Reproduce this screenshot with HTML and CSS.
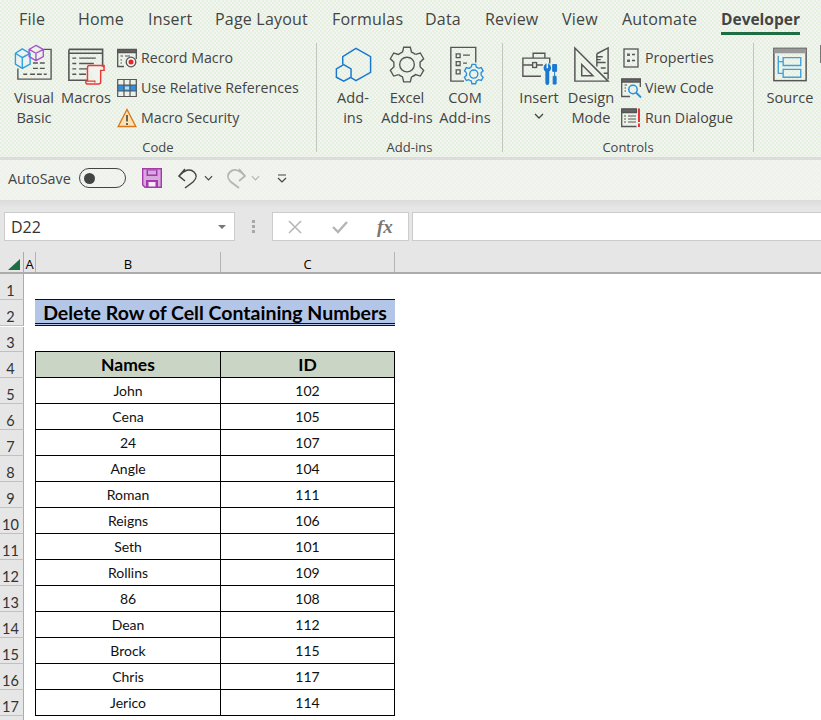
FILE: index.html
```html
<!DOCTYPE html>
<html lang="en">
<head>
<meta charset="utf-8">
<title>Delete Row of Cell Containing Numbers</title>
<link rel="stylesheet" href="styles.css">
</head>
<body>
<svg class="defs" width="0" height="0"><defs>
  <path id="tooth" d="M15.4 8.3L16.6 3.3H23.4L24.6 8.3A13.5 13.5 0 0 1 28.7 10.7"/>
  <g id="gear">
    <use href="#tooth"/>
    <use href="#tooth" transform="rotate(60 20 21)"/>
    <use href="#tooth" transform="rotate(120 20 21)"/>
    <use href="#tooth" transform="rotate(180 20 21)"/>
    <use href="#tooth" transform="rotate(240 20 21)"/>
    <use href="#tooth" transform="rotate(300 20 21)"/>
    <circle cx="20" cy="21" r="7.5"/>
  </g>
</defs></svg>

<header class="ribbon">
  <nav class="tabs">
    <span class="tab tab-file">File</span>
    <span class="tab tab-home">Home</span>
    <span class="tab tab-insert">Insert</span>
    <span class="tab tab-layout">Page Layout</span>
    <span class="tab tab-formulas">Formulas</span>
    <span class="tab tab-data">Data</span>
    <span class="tab tab-review">Review</span>
    <span class="tab tab-view">View</span>
    <span class="tab tab-automate">Automate</span>
    <span class="tab tab-active">Developer</span>
  </nav>
  <div class="groups">
    <section class="group group-code">
      <div class="group-body body-code">
        <div class="big w52">
          <svg class="big-icon" viewBox="0 0 40 44" fill="none" stroke="#555" stroke-width="1.4">
            <path d="M30 5.5H37.500V36H3.500V25"/><path d="M19 19.500H33M19 25H33M9 31H13M16 31H33" stroke-dasharray="5 2"/>
            <path d="M8 5L16 9.500V20.500L8 25L1 20.500V9.500ZM1 9.500L8 14L16 9.500M8 14V25" stroke="#2b9fe0" fill="#eef2ee"/>
            <path d="M22 1.500L29.500 5.500V13L22 17L15 13V5.500ZM15 5.500L22 9.500L29.500 5.500M22 9.500V17" stroke="#a653c9"/>
          </svg>
          <span class="big-label">Visual<br>Basic</span>
        </div>
        <div class="big w52">
          <svg class="big-icon" viewBox="0 0 40 44" fill="none" stroke="#555" stroke-width="1.4">
            <path d="M2.500 5.500H37V23M21 37H2.500V5.500M2.500 9.500H37" stroke-width="1.6"/>
            <path d="M6 14.500H10M13 14.500H30M6 20H10M13 20H28M6 25.500H10M13 25.500H22M6 31H10M13 31H20"/>
            <path d="M23 22H38.500V27H35V39C35 40.500 34 41 33 41H21.500C20 41 19.500 39.500 20 38H29V39.500M23 22C21.500 22 21.500 24 21.500 25V38M35 22C36.500 22 38.500 23 38.500 25" stroke="#ea3a36" stroke-width="1.5" fill="#f1f3ef"/>
          </svg>
          <span class="big-label">Macros</span>
        </div>
        <div class="small-col small-col-code">
          <div class="small">
            <svg class="small-icon" viewBox="0 0 20 20" fill="none" stroke="#555" stroke-width="1.3">
              <path d="M.7 2.700H19.300V11M7 18.500H.7V2.700"/><path d="M.7 1.500H19.300V4.500H.7Z" fill="#666"/>
              <path d="M3.500 8H6M8 8H13M3.500 12H5M3.500 15H5" stroke-width="1"/>
              <circle cx="14" cy="14" r="4.800" fill="#f1f3ef"/><circle cx="14" cy="14" r="2.500" fill="#e8262a" stroke="none"/>
            </svg>
            <span>Record Macro</span>
          </div>
          <div class="small">
            <svg class="small-icon" viewBox="0 0 20 20" fill="none" stroke="#555" stroke-width="1.2">
              <rect x=".7" y="7" width="18.600" height="6" fill="#2f8fe0" stroke="none"/>
              <rect x="7.500" y="8.500" width="5" height="3" fill="#bcdcf6" stroke="none"/>
              <path d="M.7 1.500H19.300V18.500H.7ZM.7 7H19.300M.7 13H19.300M7 1.500V18.500M13 1.500V18.500"/>
            </svg>
            <span>Use Relative References</span>
          </div>
          <div class="small">
            <svg class="small-icon" viewBox="0 0 20 20" fill="none">
              <path d="M10 1.500L18.800 18.500H1.200Z" fill="#fbe3b4" stroke="#d9791e" stroke-width="1.400"/>
              <path d="M10 7V13.500M10 15V17" stroke="#444" stroke-width="1.600"/>
            </svg>
            <span>Macro Security</span>
          </div>
        </div>
      </div>
      <div class="group-label">Code</div>
    </section>

    <section class="group group-addins">
      <div class="group-body body-addins">
        <div class="big w50">
          <svg class="big-icon" viewBox="0 0 40 44" fill="none" stroke="#1a78d0" stroke-width="1.500">
            <path d="M9.500 21V13L23 4.500L38 13V29L23 37.500L18 34.500"/>
            <path d="M10.500 21L18 25.500V34L10.500 38L3 34V25.500Z"/>
          </svg>
          <span class="big-label">Add-<br>ins</span>
        </div>
        <div class="big w58">
          <svg class="big-icon" viewBox="0 0 40 44" fill="none" stroke="#555" stroke-width="1.400"><use href="#gear"/></svg>
          <span class="big-label">Excel<br>Add-ins</span>
        </div>
        <div class="big w58">
          <svg class="big-icon" viewBox="0 0 40 44" fill="none" stroke="#555" stroke-width="1.400">
            <path d="M19 38H5.500V3.500H31V19"/>
            <path d="M11 10H15V14H11ZM11 18H15V22H11ZM11 26.500H15V30.500H11ZM18 11.500H25M18 19.500H22" stroke-width="1.300"/>
            <g transform="translate(17.800 19) scale(.56)" stroke="#2a8fdc" stroke-width="2.500"><use href="#gear"/></g>
          </svg>
          <span class="big-label">COM<br>Add-ins</span>
        </div>
      </div>
      <div class="group-label">Add-ins</div>
    </section>

    <section class="group group-controls">
      <div class="group-body body-controls">
        <div class="big w52">
          <svg class="big-icon" viewBox="0 0 40 44" fill="none" stroke="#555" stroke-width="1.400">
            <path d="M22 33H3.500V14.500H31V20M14 14.500V9.500H26V14.500M3.500 21.500H13M18 21.500H24"/>
            <rect x="13.500" y="19" width="4" height="5"/>
            <path d="M27 21V25.500H30V21C32 22.500 32.500 26 29.800 28V39.500C29.800 42 27.200 42 27.200 39.500V28C24.500 26 25 22.500 27 21Z" fill="#1a78d0" stroke="#1a78d0"/>
            <path d="M34 21H38V28H34ZM36 28V33M34.500 33H37.500V41H34.500Z" fill="#1a78d0" stroke="#1a78d0" stroke-width="1"/>
          </svg>
          <span class="big-label">Insert</span>
          <svg class="chev" viewBox="0 0 10 6" fill="none" stroke="#444" stroke-width="1.300"><path d="M1 1L5 5L9 1"/></svg>
        </div>
        <div class="big w52">
          <svg class="big-icon" viewBox="0 0 40 44" fill="none" stroke="#555" stroke-width="1.500">
            <path d="M3.500 4V38H37.500Z"/><path d="M10.500 21V32.500H22Z"/>
            <path d="M26 10L37.500 4V36M26 10V23M26 13H32M26 19H35M26 16H30M30 24.500H35M33 30H37"/>
          </svg>
          <span class="big-label">Design<br>Mode</span>
        </div>
        <div class="small-col">
          <div class="small">
            <svg class="small-icon" viewBox="0 0 20 20" fill="none" stroke="#555" stroke-width="1.300">
              <rect x="3" y="1" width="14" height="18"/>
              <path d="M6 5.500H9V8H6ZM6 11.500H9V14H6Z" fill="#666" stroke="none"/>
              <path d="M11 6.500H14M11 12.500H14"/>
            </svg>
            <span>Properties</span>
          </div>
          <div class="small">
            <svg class="small-icon" viewBox="0 0 20 20" fill="none" stroke="#555" stroke-width="1.300">
              <path d="M.7 1.500H19.300V9M9 18.500H.7V1.500"/><path d="M.7 1H19.300V4H.7Z" fill="#666"/>
              <path d="M3.500 7H6M3.500 10H5M3.500 13H5" stroke-width="1"/>
              <circle cx="12" cy="11.500" r="4.200" stroke="#2a8fdc" stroke-width="1.500"/><path d="M15 14.500L20 19.500" stroke="#2a8fdc" stroke-width="1.800"/>
            </svg>
            <span>View Code</span>
          </div>
          <div class="small">
            <svg class="small-icon" viewBox="0 0 20 20" fill="none" stroke="#555" stroke-width="1.300">
              <path d="M.7 1.500H15.500M15.500 18.500H.7V1.500"/><path d="M.7 1H15.500V4.500H.7Z" fill="#666"/>
              <path d="M3 8H5M7 8H15M3 11H5M7 11H15M3 14H5M7 14H15" stroke-width="1"/>
              <path d="M18 .5V14M18 15.500V19" stroke="#e8343a" stroke-width="2"/>
            </svg>
            <span>Run Dialogue</span>
          </div>
        </div>
      </div>
      <div class="group-label">Controls</div>
    </section>

    <section class="group-last">
      <div class="big w52">
        <svg class="big-icon" viewBox="0 0 40 44" fill="none" stroke="#555" stroke-width="1.500">
          <rect x="3.500" y="4.500" width="33" height="33"/><rect x="3.500" y="4.500" width="33" height="5" fill="#999" stroke="none"/>
          <path d="M13 14H31V22H13ZM13 26H31V34H13ZM8 12V30H13M8 18H13" stroke="#3ea0dc" stroke-width="1.400"/>
        </svg>
        <span class="big-label">Source</span>
      </div>
      <div class="sliver"></div>
    </section>
  </div>
</header>

<div class="qat">
  <span class="autosave">AutoSave</span>
  <span class="toggle"><span class="knob"></span></span>
  <svg class="q-save" viewBox="0 0 20 20">
    <path d="M.7.7H19.300V19.300H3L.7 17Z" fill="#d9a6df" stroke="#a23cab" stroke-width="1.400"/>
    <path d="M4.500 1.500H15.500V8H4.500Z" fill="#a23cab"/><path d="M6 2.500H14V6.500H6Z" fill="#d9a6df"/>
    <path d="M4 12H16V19H4Z" fill="#a23cab"/><path d="M6.500 14H13.500V18.500H6.500Z" fill="#f6eaf7"/>
  </svg>
  <svg class="q-undo" viewBox="0 0 20 22" fill="none" stroke="#444" stroke-width="1.500">
    <path d="M7 2L1 9L7 14M1 9C6 3 12 1 16 5C20 9 18 12 15 15L7 21"/>
  </svg>
  <svg class="q-chev" viewBox="0 0 10 6" fill="none" stroke="#444" stroke-width="1.300"><path d="M1 1L5 5L9 1"/></svg>
  <svg class="q-redo" viewBox="0 0 20 22" fill="none" stroke="#b4b4b4" stroke-width="1.800">
    <path d="M13 2L19 9L13 14M19 9C14 3 8 1 4 5C0 9 2 12 5 15L13 21"/>
  </svg>
  <svg class="q-chev q-chev-off" viewBox="0 0 10 6" fill="none" stroke="#b4b4b4" stroke-width="1.300"><path d="M1 1L5 5L9 1"/></svg>
  <svg class="q-more" viewBox="0 0 10 9" fill="none" stroke="#444" stroke-width="1.200"><path d="M1 1H9M1 4L5 8L9 4"/></svg>
</div>

<div class="fbar">
  <div class="namebox"><span>D22</span><i class="caret"></i></div>
  <div class="grip"><i></i><i></i><i></i></div>
  <div class="fbtns">
    <svg class="f-x" viewBox="0 0 14 14" fill="none" stroke="#b5b5b5" stroke-width="1.500"><path d="M1 1L13 13M13 1L1 13"/></svg>
    <svg class="f-ok" viewBox="0 0 16 14" fill="none" stroke="#b5b5b5" stroke-width="2.400"><path d="M1 7L6 12L15 2"/></svg>
    <span class="f-fx">fx</span>
  </div>
  <div class="finput"></div>
</div>

<div class="colhead">
  <div class="corner"><i></i></div>
  <div class="ch ch-a">A</div>
  <div class="ch ch-b">B</div>
  <div class="ch ch-c">C</div>
</div>

<main class="sheet">
  <div class="row r-before"><div class="rh">1</div></div>
  <div class="row r-title"><div class="rh">2</div><div class="title-cell">Delete Row of Cell Containing Numbers</div></div>
  <div class="row r-before r-short"><div class="rh">3</div></div>
  <div class="row"><div class="rh">4</div><div class="c c-b th">Names</div><div class="c c-c th">ID</div></div>
  <div class="row"><div class="rh">5</div><div class="c c-b">John</div><div class="c c-c">102</div></div>
  <div class="row"><div class="rh">6</div><div class="c c-b">Cena</div><div class="c c-c">105</div></div>
  <div class="row"><div class="rh">7</div><div class="c c-b">24</div><div class="c c-c">107</div></div>
  <div class="row"><div class="rh">8</div><div class="c c-b">Angle</div><div class="c c-c">104</div></div>
  <div class="row"><div class="rh">9</div><div class="c c-b">Roman</div><div class="c c-c">111</div></div>
  <div class="row"><div class="rh">10</div><div class="c c-b">Reigns</div><div class="c c-c">106</div></div>
  <div class="row"><div class="rh">11</div><div class="c c-b">Seth</div><div class="c c-c">101</div></div>
  <div class="row"><div class="rh">12</div><div class="c c-b">Rollins</div><div class="c c-c">109</div></div>
  <div class="row"><div class="rh">13</div><div class="c c-b">86</div><div class="c c-c">108</div></div>
  <div class="row"><div class="rh">14</div><div class="c c-b">Dean</div><div class="c c-c">112</div></div>
  <div class="row"><div class="rh">15</div><div class="c c-b">Brock</div><div class="c c-c">115</div></div>
  <div class="row"><div class="rh">16</div><div class="c c-b">Chris</div><div class="c c-c">117</div></div>
  <div class="row"><div class="rh">17</div><div class="c c-b">Jerico</div><div class="c c-c">114</div></div>
  <div class="row"><div class="rh"></div></div>
</main>
</body>
</html>
```

FILE: styles.css
```css
* { box-sizing: border-box; }
html, body { margin: 0; height: 720px; overflow: hidden; background: #fff; }
body { width: 821px; font-family: "Open Sans", "Noto Sans", sans-serif; color: #444; font-size: 14px; }
.defs { position: absolute; }

/* Ribbon */
.ribbon { height: 160px; background: #f3f4f1 repeating-conic-gradient(#e4f1df 0 25%, transparent 0 50%) 0 0 / 4px 4px; border-bottom: 3px solid #dcdcdc; overflow: hidden; }
.tabs { height: 38px; display: flex; align-items: flex-start; padding-top: 8px; font-size: 16px; letter-spacing: .2px; line-height: 22px; color: #444; }
.tab { display: block; white-space: nowrap; flex: none; }
.tab-file { margin-left: 19px; width: 59px; }
.tab-home { width: 70px; }
.tab-insert { width: 67px; }
.tab-layout { width: 117px; }
.tab-formulas { width: 93px; }
.tab-data { width: 60px; }
.tab-review { width: 77px; }
.tab-view { width: 60px; }
.tab-automate { width: 99px; }
.tab-active { font-weight: 700; font-size: 15.5px; letter-spacing: 0; position: relative; }
.tab-active::after { content: ""; position: absolute; left: 0; right: 0; top: 24px; height: 3px; background: #1f6e43; }

.groups { display: flex; height: 119px; padding-top: 5px; }
.group { height: 109px; display: flex; flex-direction: column; border-right: 1px solid #c2c4be; flex: none; }
.group-code { width: 317px; }
.group-addins { width: 186px; }
.group-controls { width: 251px; }
.group-last { display: flex; flex: none; padding-left: 10px; }
.group-body { height: 94px; display: flex; }
.body-code { padding-left: 8px; }
.body-addins { padding-left: 11px; }
.body-controls { padding-left: 10px; }
.group-label { height: 20px; margin-bottom: -5px; line-height: 20px; text-align: center; font-size: 13px; color: #444; }

.big { display: flex; flex-direction: column; align-items: center; flex: none; }
.w50 { width: 50px; }
.w52 { width: 52px; }
.w58 { width: 58px; }
.big-icon { width: 40px; height: 43px; margin-top: 1px; flex: none; overflow: visible; }
.big-label { line-height: 20px; font-size: 14.6px; text-align: center; white-space: nowrap; color: #444; }
.chev { width: 10px; height: 6px; margin-top: 6px; }

.small-col { display: flex; flex-direction: column; margin-left: 4px; }
.small-col-code { margin-left: 5px; }
.small { height: 30px; display: flex; align-items: center; gap: 4px; white-space: nowrap; font-size: 14.2px; color: #444; padding-bottom: 1px; }
.small-icon { width: 20px; height: 20px; flex: none; overflow: visible; }
.sliver { width: 3px; height: 18px; margin: 2px 0 0 4px; background: #777; flex: none; }

/* Quick access */
.qat { height: 40px; background: #f3f4f1 repeating-conic-gradient(#eef3ea 0 25%, transparent 0 50%) 0 0 / 4px 4px; display: flex; align-items: center; padding: 0 0 4px 8px; flex: none; }
.autosave { font-size: 14.4px; width: 71px; }
.toggle { width: 47px; height: 20px; border: 1.3px solid #444; border-radius: 10px; display: flex; align-items: center; padding-left: 4px; }
.knob { width: 11px; height: 11px; border-radius: 50%; background: #444; }
.q-save { width: 20px; height: 20px; margin-left: 16px; }
.q-undo { width: 20px; height: 22px; margin-left: 16px; }
.q-chev { width: 9px; height: 6px; margin-left: 6px; }
.q-redo { width: 20px; height: 22px; margin-left: 13px; }
.q-chev-off { margin-left: 5px; }
.q-more { width: 10px; height: 9px; margin-left: 17px; }

/* Formula bar */
.fbar { height: 52px; background: linear-gradient(#dcdcdc 0, #e6e6e6 8px); display: flex; padding: 12px 0 11px 4px; }
.namebox { width: 231px; background: #fff; border: 1px solid #ccc; display: flex; align-items: center; justify-content: space-between; padding: 0 8px 0 6px; font-size: 16px; color: #333; }
.caret { width: 0; height: 0; border: 4px solid transparent; border-top: 4px solid #777; border-bottom: 0; }
.grip { width: 37px; display: flex; flex-direction: column; justify-content: center; align-items: center; gap: 2px; }
.grip i { width: 3px; height: 3px; background: #a8a8a8; }
.fbtns { width: 137px; background: #fff; border: 1px solid #ccc; display: flex; align-items: center; padding-left: 15px; }
.f-x { width: 14px; height: 14px; }
.f-ok { width: 16px; height: 14px; margin-left: 30px; }
.f-fx { margin-left: 29px; font: italic 700 19px "Liberation Serif", serif; color: #777; }
.finput { flex: 1; margin-left: 3px; background: #fff; border: 1px solid #ccc; border-right: 0; }

/* Column headers */
.colhead { height: 22px; background: #e6e6e6; display: flex; border-bottom: 2px solid #ababab; font-size: 13px; color: #000; }
.corner { width: 24px; border-right: 1px solid #ababab; position: relative; }
.corner i { position: absolute; left: 8px; top: 7px; width: 0; height: 0; border-style: solid; border-width: 0 0 11px 12px; border-color: transparent transparent #1f6e43 transparent; }
.ch { display: flex; align-items: center; justify-content: center; border-right: 1px solid #b5b5b5; padding-top: 3px; line-height: 16px; font-family: "Open Sans", sans-serif; }
.ch-a { width: 12px; }
.ch-b { width: 185px; }
.ch-c { width: 174px; }

/* Sheet */
.sheet { display: flex; flex-direction: column; font-family: Lato, "Open Sans", sans-serif; color: #111; }
.row { height: 26px; display: flex; flex: none; }
.rh { width: 24px; height: 26px; flex: none; background: #e6e6e6; border-right: 1px solid #ababab; border-bottom: 1px solid #c0c0c0; text-align: center; padding: 7px 2px 0 0; line-height: 20px; font-size: 14.5px; color: #333; margin-right: 11px; }
.r-title { height: 27px; position: relative; }
.r-short { height: 25px; }
.r-short .rh { height: 25px; padding-top: 6px; }
.title-cell { width: 360px; height: 27px; margin-top: -1px; background: #b4c6e7; border-top: 1px solid #111; border-bottom: 3px double #111; text-align: center; font-weight: 700; font-size: 19.5px; line-height: 25px; color: #000; }
.c { height: 26px; display: flex; align-items: center; justify-content: center; border-bottom: 1px solid #000; border-right: 1px solid #000; font-size: 14px; }
.c-b { width: 186px; border-left: 1px solid #000; }
.c-c { width: 174px; }
.th { background: #cad5c5; font-weight: 700; font-size: 17.5px; margin-top: -1px; height: 27px; border-top: 1px solid #000; color: #000; }
```
